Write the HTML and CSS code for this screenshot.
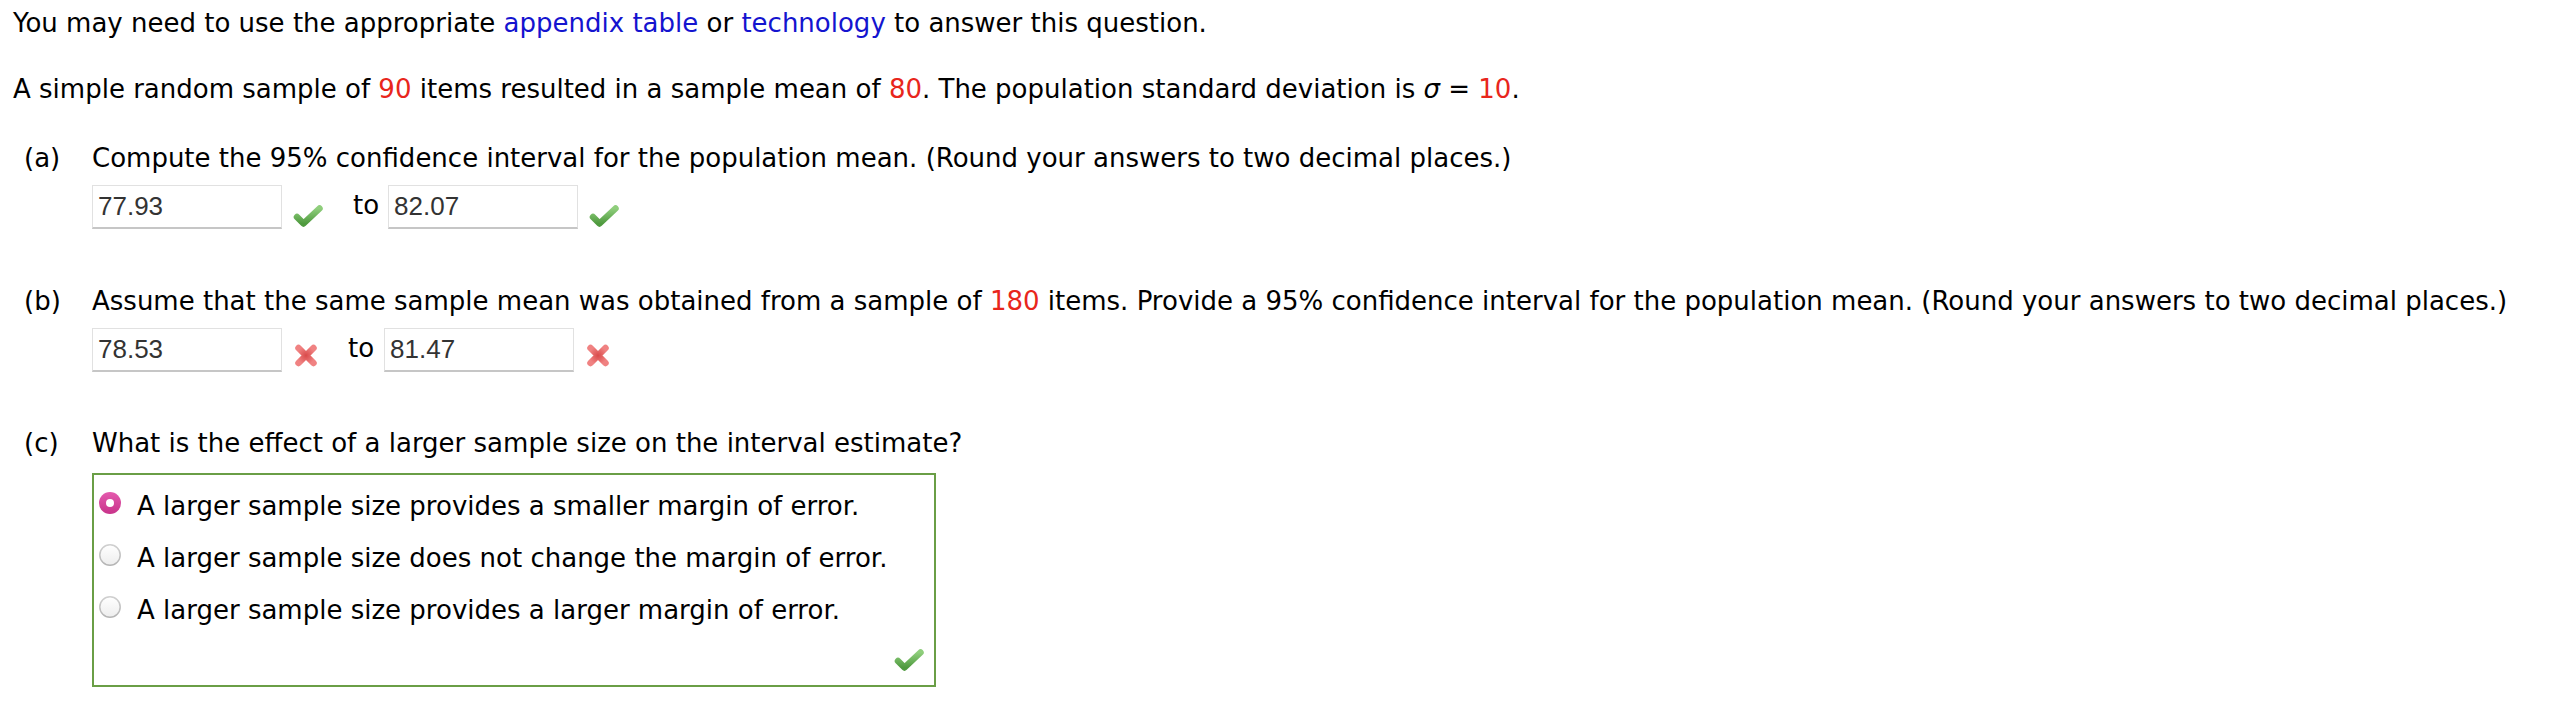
FILE: index.html
```html
<!DOCTYPE html>
<html lang="en">
<head>
<meta charset="utf-8">
<title>Confidence interval question</title>
<link rel="stylesheet" href="styles.css">
</head>
<body>
<svg width="0" height="0" class="defs" aria-hidden="true">
  <defs>
    <linearGradient id="gCheck" x1="0" y1="0" x2="0" y2="1">
      <stop offset="0" stop-color="#8fce7c"/>
      <stop offset="1" stop-color="#4f9a3f"/>
    </linearGradient>
    <radialGradient id="gCross" cx="0.5" cy="0.5" r="0.6">
      <stop offset="0" stop-color="#d94a4a"/>
      <stop offset="1" stop-color="#f08282"/>
    </radialGradient>
    <linearGradient id="gRadio" x1="0" y1="0" x2="0" y2="1">
      <stop offset="0" stop-color="#e45aae"/>
      <stop offset="1" stop-color="#c8338a"/>
    </linearGradient>
    <linearGradient id="gRadioOff" x1="0" y1="0" x2="0" y2="1">
      <stop offset="0" stop-color="#ffffff"/>
      <stop offset="1" stop-color="#ededed"/>
    </linearGradient>
    <linearGradient id="gRadioRing" x1="0" y1="0" x2="0" y2="1">
      <stop offset="0" stop-color="#d0d0d0"/>
      <stop offset="1" stop-color="#b4b4b4"/>
    </linearGradient>
    <symbol id="check" viewBox="0 0 30 24">
      <path d="M4 13 L10.5 19.5 L26.5 4.5" fill="none" stroke="url(#gCheck)" stroke-width="6.5" stroke-linecap="round" stroke-linejoin="round"/>
    </symbol>
    <symbol id="cross" viewBox="0 0 26 25">
      <path d="M5.5 5 L20.5 20 M20.5 5 L5.5 20" fill="none" stroke="url(#gCross)" stroke-width="6.5" stroke-linecap="round"/>
    </symbol>
  </defs>
</svg>

<p class="line first">You may need to use the appropriate <span class="link">appendix table</span> or <span class="link">technology</span> to answer this question.</p>

<p class="line second">A simple random sample of <span class="num">90</span> items resulted in a sample mean of <span class="num">80</span>. The population standard deviation is <i class="sigma">σ</i> = <span class="num">10</span>.</p>

<div class="part part-a">
  <div class="label">(a)</div>
  <div class="body">
    <div class="line">Compute the 95% confidence interval for the population mean. (Round your answers to two decimal places.)</div>
    <div class="answers">
      <div class="field">77.93</div>
      <svg class="icon-check" viewBox="0 0 30 24"><use href="#check"/></svg>
      <span class="to">to</span>
      <div class="field">82.07</div>
      <svg class="icon-check" viewBox="0 0 30 24"><use href="#check"/></svg>
    </div>
  </div>
</div>

<div class="part part-b">
  <div class="label">(b)</div>
  <div class="body">
    <div class="line">Assume that the same sample mean was obtained from a sample of <span class="num">180</span> items. Provide a 95% confidence interval for the population mean. (Round your answers to two decimal places.)</div>
    <div class="answers">
      <div class="field">78.53</div>
      <svg class="icon-cross" viewBox="0 0 26 25"><use href="#cross"/></svg>
      <span class="to">to</span>
      <div class="field">81.47</div>
      <svg class="icon-cross" viewBox="0 0 26 25"><use href="#cross"/></svg>
    </div>
  </div>
</div>

<div class="part part-c">
  <div class="label">(c)</div>
  <div class="body">
    <div class="line">What is the effect of a larger sample size on the interval estimate?</div>
    <div class="choices">
      <div class="choice">
        <svg class="radio" viewBox="0 0 22 22"><circle cx="11" cy="11" r="11" fill="url(#gRadio)"/><circle cx="11" cy="11" r="4" fill="#fff"/></svg>
        <span>A larger sample size provides a smaller margin of error.</span>
      </div>
      <div class="choice">
        <svg class="radio" viewBox="0 0 22 22"><circle cx="11" cy="11" r="10.2" fill="url(#gRadioOff)" stroke="url(#gRadioRing)" stroke-width="1.5"/></svg>
        <span>A larger sample size does not change the margin of error.</span>
      </div>
      <div class="choice">
        <svg class="radio" viewBox="0 0 22 22"><circle cx="11" cy="11" r="10.2" fill="url(#gRadioOff)" stroke="url(#gRadioRing)" stroke-width="1.5"/></svg>
        <span>A larger sample size provides a larger margin of error.</span>
      </div>
      <div class="choice-mark">
        <svg class="icon-check" viewBox="0 0 30 24"><use href="#check"/></svg>
      </div>
    </div>
  </div>
</div>
</body>
</html>
```

FILE: styles.css
```css
html, body {
  margin: 0;
  background: #ffffff;
}

body {
  padding: 7px 0 0 13px;
  font-family: "DejaVu Sans", Verdana, sans-serif;
  font-size: 26px;
  line-height: 32px;
  color: #000000;
  white-space: nowrap;
}

.defs {
  position: absolute;
  width: 0;
  height: 0;
  overflow: hidden;
}

p {
  margin: 0;
}

.line {
  height: 32px;
}

.first {
  margin-bottom: 34px;
}

.second {
  margin-bottom: 37px;
}

.link {
  color: #1414cf;
}

.num {
  color: #e8261c;
}

.sigma {
  font-style: italic;
}

.part {
  display: grid;
  grid-template-columns: 68px auto;
  margin-left: 11px;
}

.part-a {
  margin-bottom: 56px;
}

.part-b {
  margin-bottom: 55px;
}

.answers {
  display: flex;
  align-items: flex-start;
  margin-top: 11px;
  height: 44px;
}

.field {
  box-sizing: border-box;
  width: 190px;
  height: 44px;
  border: 1px solid #e1e1e1;
  border-bottom: 2px solid #c6c6c6;
  background: #ffffff;
  padding: 0 0 0 5px;
  font-family: "Liberation Sans", Arial, sans-serif;
  font-size: 26px;
  line-height: 41px;
  color: #333333;
}

.icon-check {
  width: 30px;
  height: 24px;
  margin-top: 19px;
  flex: none;
}

.icon-cross {
  width: 26px;
  height: 25px;
  margin-top: 15px;
  flex: none;
}

.to {
  line-height: 40px;
}

.part-a .icon-check {
  margin-left: 11px;
}

.part-a .icon-check + .to {
  margin-left: 30px;
  margin-right: 9px;
}

.part-b .icon-cross {
  margin-left: 11px;
}

.part-b .icon-cross + .to {
  margin-left: 29px;
  margin-right: 10px;
}

.choices {
  box-sizing: border-box;
  margin-top: 14px;
  width: 844px;
  height: 214px;
  border: 2px solid #6a9e46;
  padding: 5px 10px 0 5px;
}

.choice {
  display: flex;
  align-items: center;
  gap: 16px;
  height: 52px;
}

.choice span {
  line-height: 52px;
}

.radio {
  width: 22px;
  height: 22px;
  flex: none;
  margin-top: -6px;
}

.choice-mark {
  display: flex;
  justify-content: flex-end;
  margin-top: 12px;
}

.choice-mark .icon-check {
  margin-top: 0;
}
```
